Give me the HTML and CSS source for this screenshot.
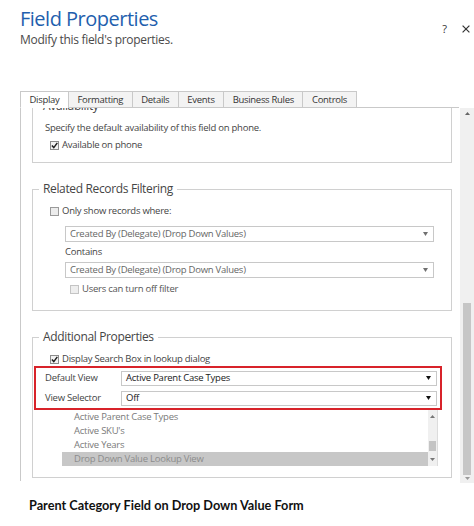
FILE: index.html
```html
<!DOCTYPE html>
<html lang="en">
<head>
<meta charset="utf-8">
<title>Field Properties</title>
<link rel="stylesheet" href="styles.css">
</head>
<body>
<div class="page">
  <header class="head">
    <div class="titles">
      <h1 class="title">Field Properties</h1>
      <p class="subtitle">Modify this field's properties.</p>
    </div>
    <div class="tools">
      <span class="help">?</span>
      <svg class="close" viewBox="0 0 8 8" width="8" height="8"><path d="M0.6 0.6L7.4 7.4M7.4 0.6L0.6 7.4" stroke="#333" stroke-width="1.2" fill="none"/></svg>
    </div>
  </header>

  <div class="dialog">
    <ul class="tabs">
      <li class="tab active">Display</li>
      <li class="tab">Formatting</li>
      <li class="tab">Details</li>
      <li class="tab">Events</li>
      <li class="tab">Business Rules</li>
      <li class="tab">Controls</li>
    </ul>
    <div class="panel">
      <div class="viewport">
        <fieldset class="group first">
          <legend>Availability</legend>
          <p class="desc">Specify the default availability of this field on phone.</p>
          <label class="check">
            <svg class="cb" viewBox="0 0 9 9" width="9" height="9"><rect x="0.5" y="0.5" width="8" height="8" fill="#f2f2f2" stroke="#8c8c8c"/><path d="M1.9 4.4L3.8 6.6L7.3 1.9" fill="none" stroke="#1e1e1e" stroke-width="1.5"/></svg>
            <span>Available on phone</span>
          </label>
        </fieldset>

        <fieldset class="group">
          <legend>Related Records Filtering</legend>
          <label class="check row-top">
            <svg class="cb" viewBox="0 0 9 9" width="9" height="9"><rect x="0.5" y="0.5" width="8" height="8" fill="#ececec" stroke="#9a9a9a"/></svg>
            <span>Only show records where:</span>
          </label>
          <div class="select muted first-select">
            <span>Created By (Delegate) (Drop Down Values)</span>
            <svg class="caret" viewBox="0 0 5 4" width="5" height="4"><path d="M0 0H5L2.5 4Z" fill="#707070"/></svg>
          </div>
          <div class="field-label">Contains</div>
          <div class="select muted">
            <span>Created By (Delegate) (Drop Down Values)</span>
            <svg class="caret" viewBox="0 0 5 4" width="5" height="4"><path d="M0 0H5L2.5 4Z" fill="#707070"/></svg>
          </div>
          <label class="check disabled">
            <svg class="cb" viewBox="0 0 9 9" width="9" height="9"><rect x="0.5" y="0.5" width="8" height="8" fill="#eeeeee" stroke="#c4c4c4"/></svg>
            <span>Users can turn off filter</span>
          </label>
        </fieldset>

        <fieldset class="group">
          <legend>Additional Properties</legend>
          <label class="check search">
            <svg class="cb" viewBox="0 0 9 9" width="9" height="9"><rect x="0.5" y="0.5" width="8" height="8" fill="#f2f2f2" stroke="#8c8c8c"/><path d="M1.9 4.4L3.8 6.6L7.3 1.9" fill="none" stroke="#1e1e1e" stroke-width="1.5"/></svg>
            <span>Display Search Box in lookup dialog</span>
          </label>
          <div class="highlight">
            <span class="prop-label">Default View</span>
            <div class="select strong">
              <span>Active Parent Case Types</span>
              <svg class="caret" viewBox="0 0 5 4" width="5" height="4"><path d="M0 0H5L2.5 4Z" fill="#111"/></svg>
            </div>
            <span class="prop-label">View Selector</span>
            <div class="select strong">
              <span>Off</span>
              <svg class="caret" viewBox="0 0 5 4" width="5" height="4"><path d="M0 0H5L2.5 4Z" fill="#111"/></svg>
            </div>
          </div>
          <div class="listbox">
            <ul class="options">
              <li>Active Parent Case Types</li>
              <li>Active SKU's</li>
              <li>Active Years</li>
              <li class="selected">Drop Down Value Lookup View</li>
            </ul>
            <div class="mini-scroll">
              <svg class="arr" viewBox="0 0 5 3" width="5" height="3"><path d="M0 3H5L2.5 0Z" fill="#777"/></svg>
              <div class="mini-thumb"></div>
              <svg class="arr down" viewBox="0 0 5 3" width="5" height="3"><path d="M0 0H5L2.5 3Z" fill="#777"/></svg>
            </div>
          </div>
        </fieldset>
      </div>
      <div class="vscroll">
        <svg class="arr" viewBox="0 0 5 3" width="5" height="3"><path d="M0 3H5L2.5 0Z" fill="#666"/></svg>
        <div class="thumb"></div>
        <svg class="arr down" viewBox="0 0 5 3" width="5" height="3"><path d="M0 0H5L2.5 3Z" fill="#999"/></svg>
      </div>
    </div>
  </div>

  <p class="caption">Parent Category Field on Drop Down Value Form</p>
</div>
</body>
</html>
```

FILE: styles.css
```css
* { box-sizing: border-box; }
html, body { margin: 0; padding: 0; background: #fff; }
body {
  font-family: "Open Sans", "Noto Sans", sans-serif;
  color: #444;
  width: 474px;
  height: 526px;
  overflow: hidden;
}
p, h1, ul { margin: 0; padding: 0; }
ul { list-style: none; }

.head {
  display: flex;
  justify-content: space-between;
  align-items: flex-start;
  padding: 7px 4px 0 20px;
}
.title {
  font-size: 20px;
  line-height: 24px;
  font-weight: 400;
  letter-spacing: -0.5px;
  color: #1f5fae;
}
.subtitle {
  margin-top: 1px;
  font-size: 12px;
  line-height: 16px;
  letter-spacing: -0.3px;
  color: #4a4a4a;
}
.tools {
  display: flex;
  align-items: center;
  gap: 15px;
  height: 13px;
  margin-top: 15px;
}
.help {
  font-size: 11px;
  line-height: 13px;
  color: #333;
}
.close { display: block; }

.dialog {
  margin: 43px 0 0 20px;
}
.tabs {
  display: flex;
  height: 17px;
  margin-right: 15px;
  border-bottom: 1px solid #c9c9c9;
  font-size: 9.5px;
  letter-spacing: -0.3px;
}
.tab {
  height: 17px;
  padding: 0 8.5px;
  border: 1px solid #c9c9c9;
  background: #f3f3f3;
  color: #333;
  line-height: 15px;
}
.tab + .tab { margin-left: -1px; }
.tab.active {
  background: #fff;
  border-bottom-color: #fff;
}

.panel {
  display: flex;
  align-items: flex-start;
}
.viewport {
  flex: 1;
  height: 373px;
  overflow: hidden;
  border-left: 1px solid #c9c9c9;
  font-size: 9.5px;
  letter-spacing: -0.25px;
  line-height: 16px;
}

.group {
  margin: 18px 8px 0 11px;
  padding: 0 0 13px;
  border: 1px solid #d0d0d0;
  min-width: 0;
}
.group.first { margin-top: -10px; padding-bottom: 9px; }
.group:last-child { padding-bottom: 11px; }
.group legend {
  margin-left: 6px;
  padding: 0 4px;
  font-size: 12px;
  line-height: 16px;
  letter-spacing: -0.35px;
  color: #454545;
}

.desc {
  margin: 6px 0 0 12px;
}
.check {
  display: flex;
  align-items: center;
  gap: 3px;
  margin: 1px 0 0 17px;
  height: 16px;
}
.cb { display: block; flex: none; }
.check.row-top { margin-top: 6px; }
.check.disabled { margin: 3px 0 0 37px; color: #555; }
.check.search { margin-top: 7px; height: 14px; }

.select {
  display: flex;
  align-items: center;
  justify-content: space-between;
  height: 16px;
  padding: 0 5px 0 4px;
  border: 1px solid #c8c8c8;
  background: #fff;
  white-space: nowrap;
}
.caret { display: block; flex: none; }
.select.muted {
  margin: 2px 17px 0 32px;
  color: #666;
}
.select.muted.first-select { margin-top: 7px; }
.field-label {
  margin: 2px 0 0 32px;
  height: 16px;
}

.highlight {
  display: grid;
  grid-template-columns: 76px 1fr;
  row-gap: 4px;
  align-items: center;
  margin: 0 9px 0 1px;
  padding: 2px 3px 2px 9px;
  border: 2px solid #d8232a;
}
.prop-label { color: #444; }
.select.strong {
  height: 15px;
  color: #1a1a1a;
}

.listbox {
  display: flex;
  height: 56px;
  margin: 0 13px 0 29px;
  border-right: 1px solid #dcdcdc;
}
.options {
  flex: 1;
  color: #7a7a7a;
}
.options li {
  height: 14px;
  line-height: 14px;
  padding-left: 12px;
}
.options li.selected {
  background: #c7c7c7;
  color: #8c8c8c;
}
.mini-scroll {
  width: 9px;
  background: #f0f0f0;
  display: flex;
  flex-direction: column;
  align-items: center;
  padding: 5px 0 5px;
}
.mini-scroll .arr { display: block; }
.mini-thumb {
  width: 7px;
  height: 10px;
  margin-top: 23px;
  background: #c4c4c4;
}
.mini-scroll .down { margin-top: auto; }

.vscroll {
  width: 14px;
  height: 375px;
  background: #f0f0f0;
  display: flex;
  flex-direction: column;
  align-items: center;
  padding: 4px 0 3px;
}
.vscroll .arr { display: block; }
.thumb {
  width: 8px;
  height: 172px;
  margin-top: 188px;
  background: #c6c6c6;
}
.vscroll .down { margin-top: auto; }

.caption {
  margin: 14px 0 0 29px;
  font-family: "Lato", "Open Sans", sans-serif;
  font-weight: 700;
  font-size: 12.7px;
  line-height: 16px;
  color: #111;
}
```
